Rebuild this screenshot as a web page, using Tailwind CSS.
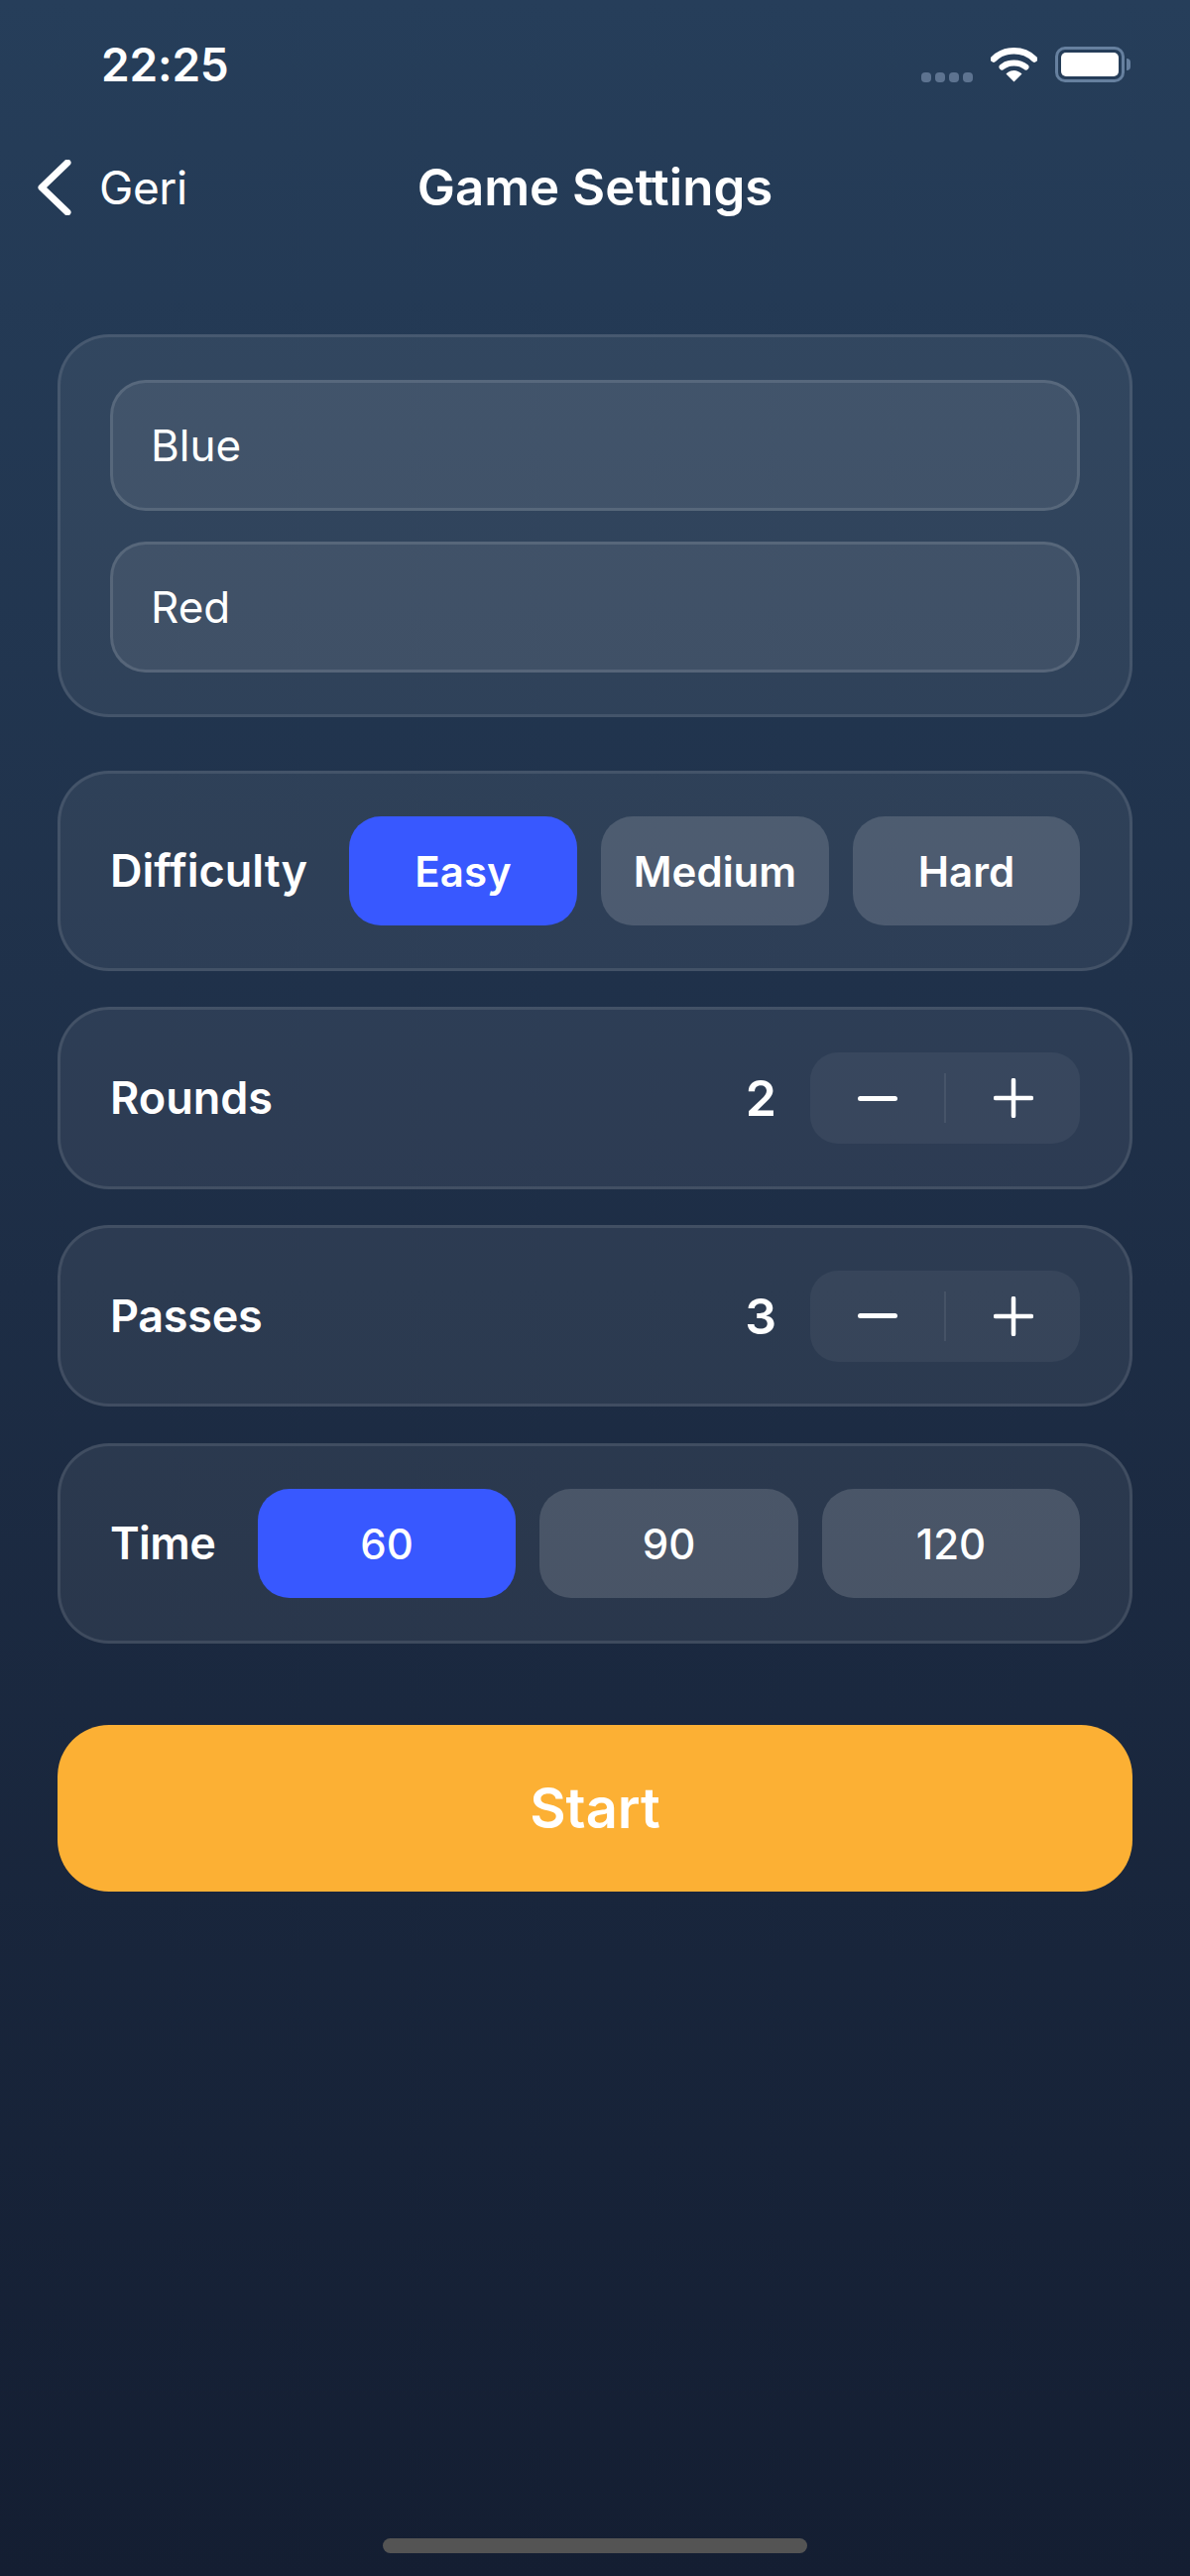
<!doctype html>
<html>
<head>
<meta charset="utf-8">
<script src="https://cdn.jsdelivr.net/npm/@tailwindcss/browser@4"></script>
</head>
<body class="m-0">
<div class="relative h-[2597px] w-[1200px] overflow-hidden bg-gradient-to-b from-[#263e5a] via-[#1d2d45] to-[#141e32] font-['Inter','Liberation_Sans',sans-serif] text-white">
  <div class="flex h-[140px] items-start justify-between pl-[102px] pr-[60px] pt-[37px]">
    <span class="text-[46px] font-semibold leading-[56px] tracking-[-0.2px]">22:25</span>
    <div class="mt-[10px] flex items-end">
      <div class="flex gap-[4px]">
        <span class="h-[10px] w-[10px] rounded-[4px] bg-[#5d7390]"></span>
        <span class="h-[10px] w-[10px] rounded-[4px] bg-[#5d7390]"></span>
        <span class="h-[10px] w-[10px] rounded-[4px] bg-[#5d7390]"></span>
        <span class="h-[10px] w-[10px] rounded-[4px] bg-[#5d7390]"></span>
      </div>
      <svg class="ml-[18px] mr-[18px]" width="47" height="36" viewBox="0 0 47 36" fill="none">
        <path d="M3 12.5C14 1.5 33 1.5 44 12.5" stroke="#fff" stroke-width="6.5" stroke-linecap="round"/>
        <path d="M11.5 20.5C18 15 29 15 35.5 20.5" stroke="#fff" stroke-width="6" stroke-linecap="round"/>
        <path d="M15.5 27.5C20.5 22.8 26.5 22.8 31.5 27.5L23.5 35.5Z" fill="#fff"/>
      </svg>
      <div class="flex items-center">
        <div class="flex h-[36px] w-[70px] items-center justify-center rounded-[10px] border-[3px] border-[#66809f]">
          <div class="h-[24px] w-[58px] rounded-[5px] bg-white"></div>
        </div>
        <div class="ml-[2px] h-[12px] w-[4px] rounded-r-[4px] bg-[#66809f]"></div>
      </div>
    </div>
  </div>

  <div class="grid h-[98px] grid-cols-[1fr_auto_1fr] items-center pl-[38px]">
    <div class="flex items-center">
      <svg width="34" height="56" viewBox="0 0 34 56" fill="none">
        <path d="M30 3L4 28L30 53" stroke="#fff" stroke-width="7" stroke-linecap="round" stroke-linejoin="round"/>
      </svg>
      <span class="ml-[28px] text-[46px] font-normal leading-[56px] tracking-[-0.4px]">Geri</span>
    </div>
    <span class="-ml-[38px] text-[51px] font-semibold leading-[60px] tracking-[0px]">Game Settings</span>
    <span></span>
  </div>

  <main class="flex flex-col px-[58px] pt-[99px]">
    <section class="flex h-[386px] flex-col gap-[31px] rounded-[52px] border-[3px] border-white/10 bg-white/[0.065] px-[50px] pt-[43px]">
      <div class="flex h-[132px] items-center rounded-[36px] border-[3px] border-white/12 bg-white/8 px-[38px] text-[44px] leading-[52px]">Blue</div>
      <div class="flex h-[132px] items-center rounded-[36px] border-[3px] border-white/12 bg-white/8 px-[38px] text-[44px] leading-[52px]">Red</div>
    </section>

    <section class="mt-[54px] flex h-[202px] items-center rounded-[52px] border-[3px] border-white/10 bg-white/[0.065] px-[50px]">
      <span class="text-[45px] font-semibold leading-[52px]">Difficulty</span>
      <div class="ml-auto flex gap-[24px]">
        <div class="flex h-[110px] w-[230px] items-center justify-center rounded-[32px] bg-[#3858ff] text-[42px] font-semibold">Easy</div>
        <div class="flex h-[110px] w-[230px] items-center justify-center rounded-[32px] bg-white/15 text-[42px] font-semibold">Medium</div>
        <div class="flex h-[110px] w-[229px] items-center justify-center rounded-[32px] bg-white/15 text-[42px] font-semibold">Hard</div>
      </div>
    </section>

    <section class="mt-[36px] flex h-[184px] items-center rounded-[52px] border-[3px] border-white/10 bg-white/[0.065] px-[50px]">
      <span class="text-[45px] font-semibold leading-[52px]">Rounds</span>
      <span class="ml-auto mr-[34px] text-[50px] font-semibold leading-[60px]">2</span>
      <div class="flex h-[92px] w-[272px] items-center rounded-[28px] bg-white/5">
        <div class="flex h-full flex-1 items-center justify-center">
          <span class="h-[5px] w-[40px] rounded-full bg-white"></span>
        </div>
        <span class="h-[50px] w-[2px] bg-white/8"></span>
        <div class="flex h-full flex-1 items-center justify-center">
          <svg width="40" height="40" viewBox="0 0 40 40"><path d="M20 2V38M2 20H38" stroke="#fff" stroke-width="4.5" stroke-linecap="round"/></svg>
        </div>
      </div>
    </section>

    <section class="mt-[36px] flex h-[183px] items-center rounded-[52px] border-[3px] border-white/10 bg-white/[0.065] px-[50px]">
      <span class="text-[45px] font-semibold leading-[52px] tracking-[-0.3px]">Passes</span>
      <span class="ml-auto mr-[34px] text-[50px] font-semibold leading-[60px]">3</span>
      <div class="flex h-[92px] w-[272px] items-center rounded-[28px] bg-white/5">
        <div class="flex h-full flex-1 items-center justify-center">
          <span class="h-[5px] w-[40px] rounded-full bg-white"></span>
        </div>
        <span class="h-[50px] w-[2px] bg-white/8"></span>
        <div class="flex h-full flex-1 items-center justify-center">
          <svg width="40" height="40" viewBox="0 0 40 40"><path d="M20 2V38M2 20H38" stroke="#fff" stroke-width="4.5" stroke-linecap="round"/></svg>
        </div>
      </div>
    </section>

    <section class="mt-[37px] flex h-[202px] items-center rounded-[52px] border-[3px] border-white/10 bg-white/[0.065] px-[50px]">
      <span class="text-[45px] font-semibold leading-[52px] tracking-[-0.6px]">Time</span>
      <div class="ml-auto flex gap-[24px]">
        <div class="flex h-[110px] w-[260px] items-center justify-center rounded-[32px] bg-[#3858ff] text-[42px] font-medium">60</div>
        <div class="flex h-[110px] w-[261px] items-center justify-center rounded-[32px] bg-white/15 text-[42px] font-medium">90</div>
        <div class="flex h-[110px] w-[260px] items-center justify-center rounded-[32px] bg-white/15 text-[42px] font-medium">120</div>
      </div>
    </section>

    <button class="mt-[82px] flex h-[168px] w-full items-center justify-center rounded-[52px] bg-[#fcb034] text-[56px] font-semibold">Start</button>
  </main>

  <div class="absolute bottom-[23px] left-[386px] h-[15px] w-[428px] rounded-full bg-[#545454]"></div>
</div>
</body>
</html>
